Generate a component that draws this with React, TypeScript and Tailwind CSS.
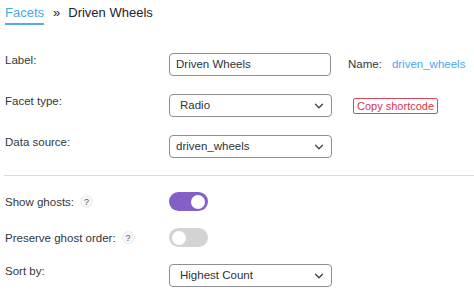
import React from 'react'

const Chevron = () => (
  <svg width="10" height="6" viewBox="0 0 10 6" fill="none" className="shrink-0">
    <path d="M1.5 1.2l3.5 3.5 3.5-3.5" stroke="#3c434a" strokeWidth="1.3" strokeLinecap="round" strokeLinejoin="round" />
  </svg>
)

const Select: React.FC<{ value: string; pl?: string }> = ({ value, pl = 'pl-[10px]' }) => (
  <div className={`flex h-[23px] w-[163px] shrink-0 items-center justify-between rounded-[4px] border border-[#8c8f94] bg-white ${pl} pr-[7px] text-[#2c3338]`}>
    <span>{value}</span>
    <Chevron />
  </div>
)

const Help = () => (
  <span className="ml-[6px] inline-flex h-[13px] w-[13px] shrink-0 items-center justify-center rounded-full border border-[#ececec] bg-[#f6f6f6] text-[9px] text-[#50575e]">
    ?
  </span>
)

const Toggle: React.FC<{ on: boolean }> = ({ on }) => (
  <div
    className={`flex h-[19px] w-[39px] shrink-0 items-center rounded-full px-[3px] ${
      on ? 'justify-end bg-[#8260c7]' : 'justify-start bg-[#d3d3d3]'
    }`}
  >
    <div className="h-[14px] w-[14px] rounded-full bg-white" />
  </div>
)

const Row: React.FC<{ label: React.ReactNode; children: React.ReactNode; center?: boolean }> = ({ label, children, center }) => (
  <div className={`flex ${center ? 'items-center' : 'items-start'}`}>
    <div className="flex w-[164px] shrink-0 items-center leading-[14px]">{label}</div>
    {children}
  </div>
)

export default function App() {
  return (
    <div className="h-[295px] w-[474px] overflow-hidden bg-white font-['Liberation_Sans',Arial,sans-serif] text-[11.5px] text-[#32373c]">
      <div className="flex items-start pl-[5px] pt-[5px] text-[13px] leading-[16px]">
        <span className="border-b-[2px] border-[#52aaf0] pb-[2px] text-[#48a6ee]">Facets</span>
        <span className="ml-[9px] text-[#1d2327]">»</span>
        <span className="ml-[8px] text-[#1d2327]">Driven Wheels</span>
      </div>

      <div className="flex flex-col gap-[18px] pl-[5px] pt-[28px]">
        <Row label="Label:">
          <div className="flex h-[23px] w-[162px] shrink-0 items-center rounded-[4px] border border-[#8c8f94] pl-[6px] text-[#2c3338]">
            Driven Wheels
          </div>
          <div className="flex h-[23px] items-center">
            <span className="ml-[17px]">Name:</span>
            <span className="ml-[10px] text-[#4aa8ee]">driven_wheels</span>
          </div>
        </Row>
        <Row label="Facet type:">
          <Select value="Radio" />
          <div className="flex h-[23px] items-center">
            <span className="ml-[21px] rounded-[2px] border border-[#d8475a] px-[3px] text-[11px] leading-[14px] text-[#d63649]">
              Copy shortcode
            </span>
          </div>
        </Row>
        <Row label="Data source:">
          <Select value="driven_wheels" pl="pl-[6px]" />
        </Row>
      </div>

      <div className="ml-[4px] mt-[17px] h-px bg-[#dcdcde]" />

      <div className="flex flex-col gap-[17px] pl-[5px] pt-[16px]">
        <Row center label={<><span>Show ghosts:</span><Help /></>}>
          <Toggle on />
        </Row>
        <Row center label={<><span>Preserve ghost order:</span><Help /></>}>
          <Toggle on={false} />
        </Row>
        <Row label="Sort by:">
          <Select value="Highest Count" />
        </Row>
      </div>
    </div>
  )
}
